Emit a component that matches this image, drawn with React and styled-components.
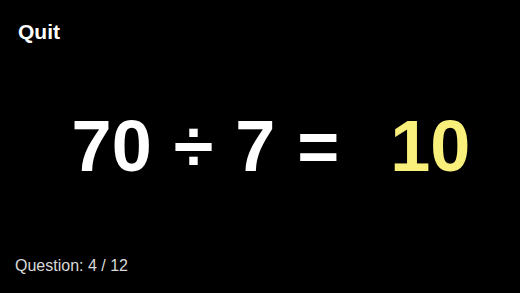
import React from 'react'
import styled, { createGlobalStyle } from 'styled-components'

const Global = createGlobalStyle`
    html, body {
        margin:0;
        padding:0;
        background:#000;
    }
    #root {
        height:100vh;
    }
`

const Screen = styled.div`
    height:100%;
    display:flex;
    flex-direction:column;
    background:#000;
    color:#fff;
    font-family:"Liberation Sans", Arial, sans-serif;
`

const TopBar = styled.div`
    display:flex;
    padding:20px 0 0 18px;
`

const QuitButton = styled.button`
    border:none;
    outline:none;
    background:transparent;
    padding:0;
    color:#fff;
    font-family:inherit;
    font-weight:700;
    font-size:21px;
    line-height:24px;
    cursor:pointer;
`

const Stage = styled.div`
    flex:1;
    display:flex;
    align-items:center;
    justify-content:center;
    padding:0 0 10px 22px;
`

const Equation = styled.div`
    display:flex;
    align-items:baseline;
    font-weight:700;
    font-size:72px;
    line-height:72px;
    word-spacing:2px;
    white-space:pre;
`

const Answer = styled.span`
    margin-left:${({ gap }) => gap}px;
    color:#f9f07c;
`

const Footer = styled.div`
    padding:0 0 18px 15px;
    font-size:16px;
    line-height:18px;
    color:#d9d9d9;
`

const App = () => {
    const question = { a: 70, b: 7, answer: 10, index: 4, total: 12 }

    return (
        <Screen>
            <Global />
            <TopBar>
                <QuitButton>Quit</QuitButton>
            </TopBar>
            <Stage>
                <Equation>
                    <span>{`${question.a} ÷ ${question.b} =`}</span>
                    <Answer gap={51}>{question.answer}</Answer>
                </Equation>
            </Stage>
            <Footer>Question: {question.index} / {question.total}</Footer>
        </Screen>
    )
}

export default App
